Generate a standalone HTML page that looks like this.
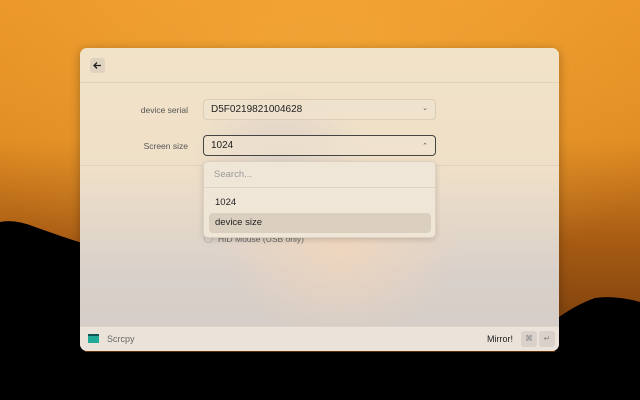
<!DOCTYPE html>
<html><head><meta charset="utf-8"><style>
*{margin:0;padding:0;box-sizing:border-box}
body{width:640px;height:400px;overflow:hidden;position:relative;font-family:"Liberation Sans",sans-serif;background:#000}
.bg{position:absolute;inset:0}
.win{position:absolute;left:80px;top:48px;width:479px;height:303px;border-radius:7px;overflow:hidden;
background:radial-gradient(ellipse 120px 90px at 260px 200px,rgba(245,215,185,.7),transparent),radial-gradient(ellipse 90px 70px at 200px 110px,rgba(210,200,200,.6),transparent),linear-gradient(180deg,#f1e3c8 0%,#efdfc8 40%,#d9d0ca 75%,#d4ccc6 100%);box-shadow:0 2px 10px rgba(0,0,0,.3)}
.top{position:absolute;left:0;top:0;width:100%;height:35px;border-bottom:1px solid #e2d2b8}
.back{position:absolute;left:10px;top:10px;width:15px;height:15px;border-radius:3px;background:#dfd2bf}
.lbl{position:absolute;font-size:8.5px;color:#555;text-align:right;width:100px}
.sel{position:absolute;left:123px;width:233px;height:21px;border:1px solid #dccdb5;border-radius:4px;font-size:10px;color:#222;padding:4px 0 0 7px;background:rgba(240,228,208,.6)}
.sel .ch{position:absolute;right:7px;top:4px;font-size:7px;color:#555}
.sep{position:absolute;left:0;top:117px;width:100%;border-top:1px solid #e0d2bc}
.dd{position:absolute;left:123px;top:113px;width:233px;height:77px;border-radius:5px;background:#f0e6d8;box-shadow:0 2px 6px rgba(0,0,0,.15);border:1px solid #ddd0bf}
.foot{position:absolute;left:0;bottom:0;width:100%;height:25px;background:#ebe2da;border-top:1px solid #ddd3c9}
.kbd{position:absolute;top:4px;width:16px;height:16px;border-radius:3px;background:#d9d1ca;font-size:8px;color:#888;text-align:center;line-height:16px}
</style></head><body>
<svg class="bg" width="640" height="400">
<defs>
<linearGradient id="g" x1="0" y1="0" x2="0" y2="1"><stop offset="0" stop-color="#eb9628"/><stop offset=".35" stop-color="#e08c22"/><stop offset=".6" stop-color="#a85c14"/><stop offset="1" stop-color="#5a2a08"/></linearGradient>
<radialGradient id="r" cx=".5" cy=".15" r=".6"><stop offset="0" stop-color="#f8b040" stop-opacity=".6"/><stop offset="1" stop-color="#f8b040" stop-opacity="0"/></radialGradient>
</defs>
<rect width="640" height="400" fill="url(#g)"/>
<rect width="640" height="400" fill="url(#r)"/>
<path d="M0 222 Q15 219 35 227 Q60 236 85 244 L85 400 L0 400Z" fill="#000"/>
<path d="M555 320 Q575 305 595 298 Q615 295 640 302 L640 400 L555 400Z" fill="#000"/>
<rect x="0" y="352" width="640" height="48" fill="#000"/>
</svg>
<div class="win">
<div class="top"><div class="back"><svg width="15" height="15"><path d="M11 7.5H4M7 4.5L4 7.5 7 10.5" stroke="#222" stroke-width="1.3" fill="none"/></svg></div></div>
<div class="lbl" style="left:8px;top:57px">device serial</div>
<div class="sel" style="top:51px">D5F0219821004628<span class="ch">⌄</span></div>
<div class="lbl" style="left:8px;top:93px">Screen size</div>
<div class="sel" style="top:87px;border:1px solid #444">1024<span class="ch" style="top:6px">⌃</span></div>
<div class="sep"></div>
<div style="position:absolute;left:124px;top:186px;width:9px;height:9px;border:1px solid #bbb;border-radius:50%"></div>
<div style="position:absolute;left:138px;top:186px;font-size:8.5px;color:#666">HID Mouse (USB only)</div>
<div class="dd">
<div style="position:absolute;left:10px;top:7px;font-size:9.5px;color:#999">Search...</div>
<div style="position:absolute;left:0;top:25px;width:100%;border-top:1px solid #dfd3c3"></div>
<div style="position:absolute;left:11px;top:35px;font-size:9.5px;color:#222">1024</div>
<div style="position:absolute;left:5px;top:51px;width:222px;height:20px;border-radius:4px;background:#dbcfc0"></div>
<div style="position:absolute;left:11px;top:55px;font-size:9.5px;color:#222">device size</div>
</div>
<div class="foot">
<div style="position:absolute;left:8px;top:7px;width:11px;height:9px;background:#2a9;border-top:2px solid #155"></div>
<div style="position:absolute;left:27px;top:7px;font-size:9px;color:#666">Scrcpy</div>
<div style="position:absolute;right:46px;top:7px;font-size:9px;color:#222">Mirror!</div>
<div class="kbd" style="right:22px">⌘</div>
<div class="kbd" style="right:4px">↵</div>
</div>
</div>
</body></html>
